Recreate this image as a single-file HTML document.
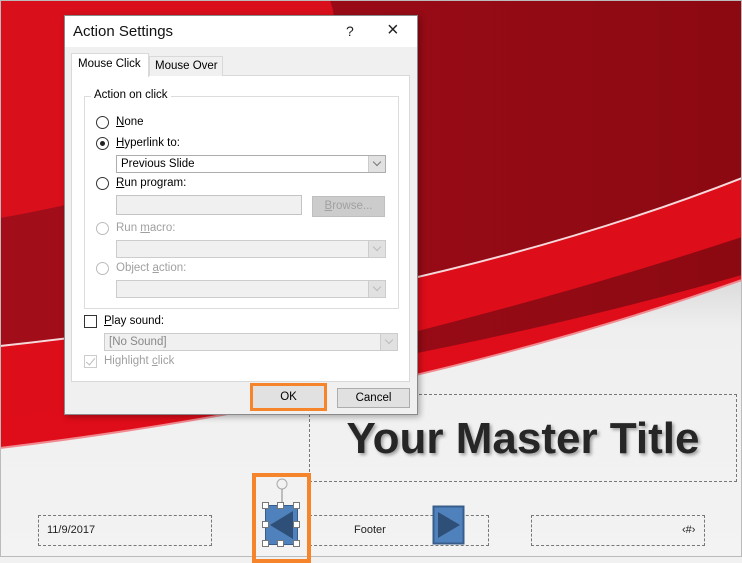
<!DOCTYPE html>
<html><head><meta charset="utf-8"><style>
*{box-sizing:border-box;margin:0;padding:0}
body{width:742px;height:557px;overflow:hidden;font-family:"Liberation Sans",sans-serif;font-size:11.5px;color:#000;position:relative;background:#f1f1f1}
.a{position:absolute}
.dot{position:absolute;border:1px dashed #777}
.radio{position:absolute;width:13px;height:13px;border:1px solid #333;border-radius:50%;background:#fff}
.radio.dis{border-color:#bbb}
.lbl{position:absolute;white-space:nowrap}
.dis{color:#a0a0a0}
.dd{position:absolute;border:1px solid #adadad;background:#fff;height:18px;line-height:16px;padding-left:4px}
.dd.d{background:#f0f0f0;border-color:#ccc}
.dd .ar{position:absolute;right:0;top:0;width:17px;height:16px;background:#e1e1e1;border-left:1px solid #ccc}
.dd .ar:after{content:"";position:absolute;left:5px;top:3px;width:5px;height:5px;border-right:1px solid #777;border-bottom:1px solid #777;transform:rotate(45deg)}
.dd.d .ar:after{border-color:#bbb}
.h{position:absolute;width:7px;height:7px;background:#fff;border:1px solid #777}
u{text-decoration:underline}
</style></head><body>
<svg class="a" style="left:0;top:0" width="742" height="557">
<defs>
<linearGradient id="g" x1="0" y1="0" x2="0" y2="1"><stop offset="0" stop-color="#d8d8d8"/><stop offset="0.2" stop-color="#efefef"/><stop offset="1" stop-color="#f3f3f3"/></linearGradient>
<linearGradient id="dk" x1="0" y1="0" x2="1" y2="0"><stop offset="0" stop-color="#a30d1a"/><stop offset="1" stop-color="#8c0912"/></linearGradient>
</defs>
<rect x="0" y="0" width="742" height="557" fill="#f1f1f1"/>
<path d="M0,440 Q400,392 742,272 L742,557 L0,557Z" fill="url(#g)"/>
<path d="M0,0 H742 V280 Q400,400 0,448Z" fill="url(#dk)"/>
<path d="M0,0 H330 Q380,150 0,218Z" fill="#d90f1c"/>
<path d="M0,346 Q430,300 742,178 L742,237 Q430,340 0,425Z" fill="#dd0d19"/>
<path d="M0,346 Q430,300 742,178" fill="none" stroke="#f6d8da" stroke-width="2"/>
<path d="M0,418 Q400,372 742,275 L742,280 Q400,400 0,448Z" fill="#df0d19"/>
<path d="M0,448 Q400,400 742,280" fill="none" stroke="#f08a90" stroke-width="2"/>
<rect x="0.5" y="0.5" width="741" height="556" fill="none" stroke="#bbb"/>
</svg>

<div class="dot" style="left:309px;top:394px;width:428px;height:88px"></div>
<div class="a" style="left:309px;top:414px;width:428px;text-align:center;font-size:44px;font-weight:bold;color:#262626;text-shadow:2px 2px 3px rgba(0,0,0,.35);white-space:nowrap">Your Master Title</div>
<div class="dot" style="left:38px;top:515px;width:174px;height:31px"></div>
<div class="lbl" style="left:47px;top:524px;font-size:11px;color:#222">11/9/2017</div>
<div class="dot" style="left:309px;top:515px;width:180px;height:31px"></div>
<div class="lbl" style="left:354px;top:524px;font-size:11px;color:#222">Footer</div>
<div class="dot" style="left:531px;top:515px;width:174px;height:31px"></div>
<div class="lbl" style="left:682px;top:524px;font-size:11px;color:#222">‹#›</div>

<div class="a" style="left:252px;top:473px;width:59px;height:90px;border:4px solid #f5842a"></div>
<svg class="a" style="left:262px;top:476px" width="40" height="72">
<circle cx="20" cy="8" r="5" fill="none" stroke="#aaa"/><line x1="20" y1="13" x2="20" y2="30" stroke="#888"/>
<rect x="3.5" y="29.5" width="32" height="39" fill="#4f81bd" stroke="#385d8a"/>
<path d="M8,49 L31,35 L31,63Z" fill="#2e4f77"/>
</svg>
<div class="h" style="left:262px;top:502px"></div><div class="h" style="left:277px;top:502px"></div><div class="h" style="left:293px;top:502px"></div>
<div class="h" style="left:262px;top:521px"></div><div class="h" style="left:293px;top:521px"></div>
<div class="h" style="left:262px;top:540px"></div><div class="h" style="left:277px;top:540px"></div><div class="h" style="left:293px;top:540px"></div>
<svg class="a" style="left:432px;top:505px" width="34" height="41">
<rect x="1.5" y="1.5" width="30" height="37" fill="#4f81bd" stroke="#385d8a" stroke-width="2"/>
<path d="M6,7 L28,20 L6,33Z" fill="#2e4f77"/>
</svg>

<div class="a" style="left:64px;top:15px;width:354px;height:400px;background:#f0f0f0;border:1px solid #8a8a8a;box-shadow:2px 2px 6px rgba(0,0,0,.3)">
<div class="a" style="left:0;top:0;width:352px;height:31px;background:#fff"></div>
<div class="lbl" style="left:8px;top:7px;font-size:15px;color:#111">Action Settings</div>
<div class="lbl" style="left:281px;top:7px;font-size:14px;color:#222">?</div>
<div class="lbl" style="left:322px;top:3px;font-size:20px;color:#222">×</div>
<div class="a" style="left:6px;top:59px;width:339px;height:307px;background:#fff;border:1px solid #d9d9d9"></div>
<div class="a" style="left:6px;top:37px;width:78px;height:24px;background:#fff;border:1px solid #d9d9d9;border-bottom:none"></div>
<div class="lbl" style="left:13px;top:42px">Mouse Click</div>
<div class="a" style="left:84px;top:40px;width:74px;height:20px;background:#f0f0f0;border:1px solid #d9d9d9;border-bottom:none"></div>
<div class="lbl" style="left:90px;top:44px">Mouse Over</div>
<div class="a" style="left:19px;top:80px;width:315px;height:213px;border:1px solid #dcdcdc"></div>
<div class="lbl" style="left:26px;top:73px;background:#fff;padding:0 3px">Action on click</div>
</div>
<div class="radio" style="left:96px;top:116px"></div><div class="lbl" style="left:116px;top:116px"><u>N</u>one</div>
<div class="radio" style="left:96px;top:137px"></div><div class="a" style="left:100px;top:141px;width:5px;height:5px;border-radius:50%;background:#222"></div><div class="lbl" style="left:116px;top:137px"><u>H</u>yperlink to:</div>
<div class="dd" style="left:116px;top:155px;width:270px">Previous Slide<div class="ar"></div></div>
<div class="radio" style="left:96px;top:177px"></div><div class="lbl" style="left:116px;top:177px"><u>R</u>un program:</div>
<div class="a" style="left:116px;top:195px;width:186px;height:20px;background:#f0f0f0;border:1px solid #c4c4c4"></div>
<div class="a dis" style="left:312px;top:196px;width:73px;height:21px;background:#ccc;border:1px solid #bfbfbf;text-align:center;line-height:19px"><u>B</u>rowse...</div>
<div class="radio dis" style="left:96px;top:222px"></div><div class="lbl dis" style="left:116px;top:222px">Run <u>m</u>acro:</div>
<div class="dd d" style="left:116px;top:240px;width:270px"><div class="ar"></div></div>
<div class="radio dis" style="left:96px;top:262px"></div><div class="lbl dis" style="left:116px;top:262px">Object <u>a</u>ction:</div>
<div class="dd d" style="left:116px;top:280px;width:270px"><div class="ar"></div></div>
<div class="a" style="left:84px;top:315px;width:13px;height:13px;border:1px solid #333;background:#fff"></div>
<div class="lbl" style="left:104px;top:315px"><u>P</u>lay sound:</div>
<div class="dd d" style="left:104px;top:333px;width:294px;color:#888">[No Sound]<div class="ar"></div></div>
<div class="a" style="left:84px;top:355px;width:13px;height:13px;border:1px solid #ccc"></div>
<div class="a" style="left:88px;top:356px;width:5px;height:9px;border-right:1.5px solid #bbb;border-bottom:1.5px solid #bbb;transform:rotate(40deg)"></div>
<div class="lbl dis" style="left:104px;top:355px">Highlight <u>c</u>lick</div>
<div class="a" style="left:250px;top:383px;width:77px;height:28px;border:3px solid #f5842a;background:#e1e1e1;text-align:center;line-height:22px">OK</div>
<div class="a" style="left:337px;top:388px;width:73px;height:20px;border:1px solid #adadad;background:#e1e1e1;text-align:center;line-height:18px">Cancel</div>
</body></html>
